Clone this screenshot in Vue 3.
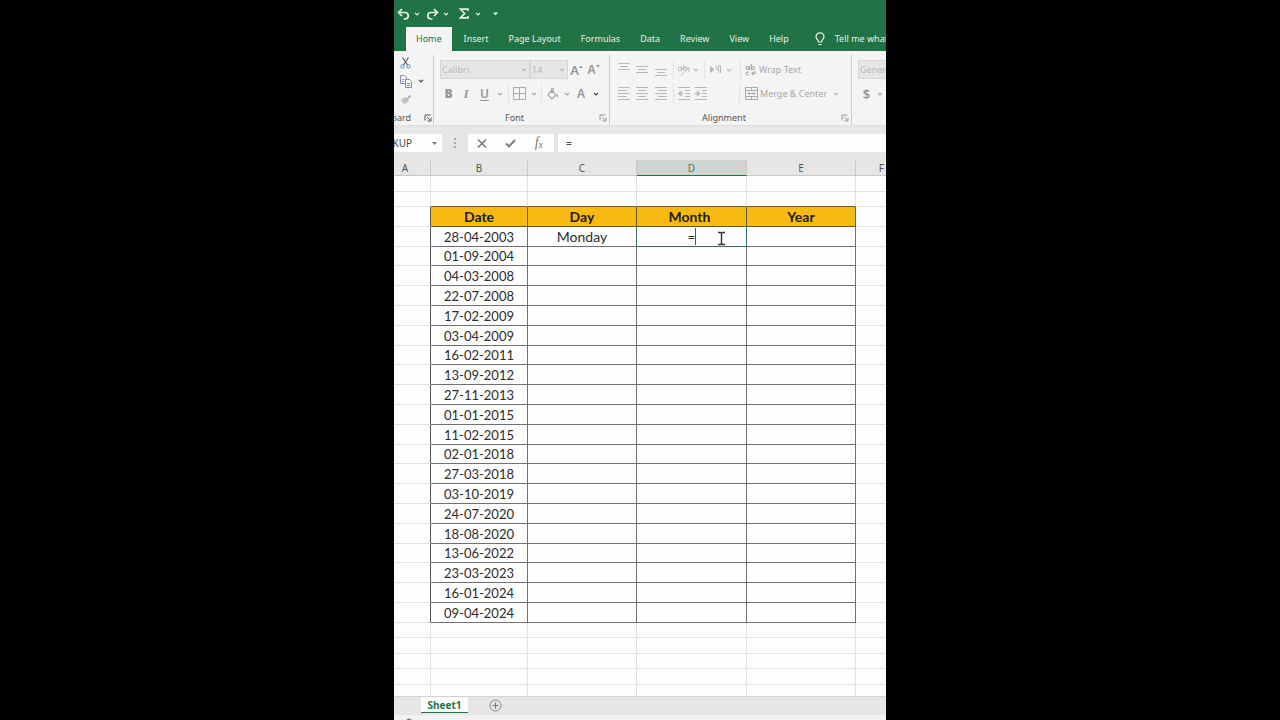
<script setup>
import { h, ref } from 'vue'

const Chevron = () =>
  h('svg', { class: 'chevron', width: 6, height: 4, viewBox: '0 0 6 4', 'aria-hidden': 'true' }, [
    h('path', { d: 'M1 .8 3 2.8 5 .8', fill: 'none', stroke: 'currentColor', 'stroke-width': 1.2 })
  ])

const Launcher = () =>
  h('svg', { width: 8, height: 8, viewBox: '0 0 8 8', 'aria-hidden': 'true' }, [
    h('path', { d: 'M1 6.5V1h5.5M3 3l3.5 3.5M7 3.500V7H3.500', fill: 'none', stroke: 'currentColor', 'stroke-width': 1 })
  ])

const Lines = (props) =>
  h('svg', { width: 12, height: 13, viewBox: '0 0 12 13', 'aria-hidden': 'true' }, [
    h('path', { d: props.d, fill: 'none', stroke: 'currentColor', 'stroke-width': 1 })
  ])
Lines.props = ['d']

const tabs = ['Home', 'Insert', 'Page Layout', 'Formulas', 'Data', 'Review', 'View', 'Help']
const vertical = [
  { label: 'Top Align', d: 'M0 .5h12M2 3.500h8M0 6.500h12' },
  { label: 'Middle Align', d: 'M0 3.500h12M2 6.500h8M0 9.500h12' },
  { label: 'Bottom Align', d: 'M0 6.500h12M2 9.500h8M0 12.500h12' }
]
const horizontal = [
  { label: 'Align Left', d: 'M0 .5h12M0 3.500h9M0 6.500h12M0 9.500h9M0 12.500h12' },
  { label: 'Center', d: 'M0 .5h12M2 3.500h8M0 6.500h12M2 9.500h8M0 12.500h12' },
  { label: 'Align Right', d: 'M0 .5h12M3 3.500h9M0 6.500h12M3 9.500h9M0 12.500h12' }
]
const columns = ['A', 'B', 'C', 'D', 'E', 'F']
const dates = [
  '28-04-2003', '01-09-2004', '04-03-2008', '22-07-2008', '17-02-2009',
  '03-04-2009', '16-02-2011', '13-09-2012', '27-11-2013', '01-01-2015',
  '11-02-2015', '02-01-2018', '27-03-2018', '03-10-2019', '24-07-2020',
  '18-08-2020', '13-06-2022', '23-03-2023', '16-01-2024', '09-04-2024'
]
const nameBox = ref('VLOOKUP')
const formula = ref('=')
</script>

<template>
  <main class="stage">
    <div class="excel">
      <header class="titlebar">
        <button class="undo" aria-label="Undo">
          <svg width="13" height="12" viewBox="0 0 13 12"><path d="M5 1 1.500 4.500 5 8M1.500 4.500H8a3.200 3.200 0 0 1 0 6.500H6.500" /></svg>
        </button>
        <button class="narrow" aria-label="Undo history"><Chevron /></button>
        <button class="redo" aria-label="Redo">
          <svg width="13" height="12" viewBox="0 0 13 12"><path d="M8 1l3.500 3.500L8 8M11.500 4.500H5a3.200 3.200 0 0 0 0 6.500h1.500" /></svg>
        </button>
        <button class="narrow" aria-label="Redo history"><Chevron /></button>
        <button class="sum" aria-label="AutoSum">
          <svg width="10" height="11" viewBox="0 0 10 11"><path d="M9 3V1.200H1.500L5.500 5.500l-4 4.300H9V8" /></svg>
        </button>
        <button class="narrow" aria-label="AutoSum options"><Chevron /></button>
        <button class="customize" aria-label="Customize toolbar">
          <svg width="5" height="5" viewBox="0 0 5 5"><path class="solid" d="M0 1.500h5L2.500 4.500z" /></svg>
        </button>
      </header>

      <nav class="tabs" aria-label="Ribbon tabs">
        <button v-for="tab in tabs" :key="tab" :class="{ active: tab === 'Home' }">{{ tab }}</button>
        <button class="tell">
          <svg width="10" height="14" viewBox="0 0 10 14" aria-hidden="true"><path d="M3.300 10V8.800C2 7.500 1 6.500 1 4.800a4 4 0 0 1 8 0C9 6.500 8 7.500 6.700 8.800V10zM3.500 12.500h3" /></svg>
          <span>Tell me what</span>
        </button>
      </nav>

      <section class="ribbon" aria-label="Home ribbon">
        <div class="group clipboard">
          <div class="tools clip-tools">
            <button class="cut" aria-label="Cut">
              <svg width="11" height="12" viewBox="0 0 11 12" fill="none"><path d="M2.500.5 7.500 8M8.500.5 3.500 8" stroke="#666" stroke-width="1.300" /><circle cx="2.500" cy="9.500" r="1.700" stroke="#4b94bd" /><circle cx="8.500" cy="9.500" r="1.700" stroke="#4b94bd" /></svg>
            </button>
            <button aria-label="Copy">
              <svg width="12" height="13" viewBox="0 0 12 13" fill="#f8f8f8" stroke="#8b8aa8"><path d="M.5.500h4l2 2v6h-6z" /><path d="M5.500 4.500h4l2 2v6h-6z" /><path d="M2 4.500h2M2 6.500h2M7 8.500h3M7 10.500h3" stroke="#6ba0c4" /></svg>
            </button>
            <button class="dark" aria-label="Copy options"><Chevron /></button>
            <button aria-label="Format Painter">
              <svg width="12" height="11" viewBox="0 0 12 11"><path d="M7 4 10 1l1 1-3 3z" fill="#999" /><path d="M1 5l3-1 4 3-2 3-2-1-1 1z" fill="#c4c4c4" /><path d="m4.500 3.500 4 3.500" stroke="#aaa" stroke-width="1.300" /></svg>
            </button>
          </div>
          <div class="caption"><span class="cut-label">Clipboard</span><button class="dark" aria-label="Clipboard settings"><Launcher /></button></div>
        </div>

        <div class="group font">
          <div class="tools">
            <div class="row font-top">
              <label class="pick"><select aria-label="Font"><option>Calibri</option></select><Chevron /></label>
              <label class="pick"><select aria-label="Font size"><option>14</option></select><Chevron /></label>
              <button class="letter big" aria-label="Increase Font Size">A<svg width="4" height="3" viewBox="0 0 4 3"><path d="M0 3 2 .5 4 3z" fill="currentColor" /></svg></button>
              <button class="letter" aria-label="Decrease Font Size">A<svg width="4" height="3" viewBox="0 0 4 3"><path d="M0 0l2 2.500L4 0z" fill="currentColor" /></svg></button>
            </div>
            <div class="row font-bottom">
              <button class="letter" aria-label="Bold"><b>B</b></button>
              <button class="letter" aria-label="Italic"><i>I</i></button>
              <button class="letter" aria-label="Underline"><u>U</u></button>
              <button aria-label="Underline options"><Chevron /></button>
              <span class="rule"></span>
              <button aria-label="Borders"><svg width="13" height="13" viewBox="0 0 13 13"><path d="M.5.500h12v12H.5zM6.500.500v12M.5 6.500h12" fill="none" stroke="currentColor" /></svg></button>
              <button aria-label="Border options"><Chevron /></button>
              <span class="rule"></span>
              <button aria-label="Fill Color"><svg width="12" height="12" viewBox="0 0 12 12"><path d="M4.500 2.500 9 7l-4 4-4-4zM4.500 5V.8h2V4" fill="none" stroke="currentColor" stroke-width="1.200" /><path d="M10.200 5.500c1 2 1.500 3 .3 3.500s-1.500-1.500-.3-3.500" fill="currentColor" /></svg></button>
              <button aria-label="Fill options"><Chevron /></button>
              <button class="letter" aria-label="Font Color">A</button>
              <button class="dark" aria-label="Font color options"><Chevron /></button>
            </div>
          </div>
          <div class="caption"><span>Font</span><button aria-label="Font settings"><Launcher /></button></div>
        </div>

        <div class="group alignment">
          <div class="tools">
            <div class="row align-top">
              <button v-for="v in vertical" :key="v.label" :aria-label="v.label"><Lines :d="v.d" /></button>
              <span class="rule"></span>
              <button aria-label="Orientation"><svg width="13" height="12" viewBox="0 0 13 12" fill="none" stroke="currentColor"><path d="M4 11.500 11 4.500M12 8V4H8.500" /><circle cx="2.800" cy="5" r="1.800" /><path d="M4.800 3v4M6.500 1v5" /><circle cx="8" cy="4.500" r="1.500" /></svg></button>
              <button aria-label="Orientation options"><Chevron /></button>
              <span class="rule"></span>
              <button aria-label="Text direction"><svg width="11" height="9" viewBox="0 0 11 9" fill="none" stroke="currentColor"><path d="M.5 1v7M1 2l3 2.500L1 7z" fill="currentColor" /><path d="M8.500 8V1M10.500 8V1M11 1H7.500a1.500 1.500 0 0 0 0 3.500h1" /></svg></button>
              <button aria-label="Direction options"><Chevron /></button>
              <span class="rule"></span>
              <button class="wide"><svg width="12" height="12" viewBox="0 0 12 12" fill="none" stroke="currentColor" stroke-width="1.200"><circle cx="2.500" cy="4" r="1.500" /><path d="M4.500 2v4M6.500 0v6M4.500 8H2.500a1.500 1.500 0 0 0 0 3h2M10 7v2.500H7M8.500 8 7 9.500 8.500 11" /><circle cx="8" cy="4" r="1.500" /></svg>Wrap Text</button>
            </div>
            <div class="row align-bottom">
              <button v-for="a in horizontal" :key="a.label" :aria-label="a.label"><Lines :d="a.d" /></button>
              <span class="rule"></span>
              <button aria-label="Decrease Indent"><svg width="12" height="13" viewBox="0 0 12 13" fill="none" stroke="currentColor"><path d="M0 .5h12M7 3.500h5M7 6.500h5M7 9.500h5M0 12.500h12" /><path d="M5 6.500H1M3.500 4 1 6.500 3.500 9" stroke-width="1.500" /></svg></button>
              <button aria-label="Increase Indent"><svg width="12" height="13" viewBox="0 0 12 13" fill="none" stroke="currentColor"><path d="M0 .5h12M7 3.500h5M7 6.500h5M7 9.500h5M0 12.500h12" /><path d="M0 6.500h4M2 4l2.500 2.500L2 9" stroke-width="1.500" /></svg></button>
              <span class="rule merge-rule"></span>
              <button class="wide"><svg width="13" height="13" viewBox="0 0 13 13" fill="none" stroke="currentColor"><path d="M.5.500h12v12H.5zM.5 3.500h12M.5 9.500h12M6.500.500v3M6.500 9.500v3M3 6.500h7M4.500 5 3 6.500 4.500 8M8.500 5 10 6.500 8.500 8" /></svg>Merge &amp; Center</button>
              <button aria-label="Merge options"><Chevron /></button>
            </div>
          </div>
          <div class="caption"><span>Alignment</span><button aria-label="Alignment settings"><Launcher /></button></div>
        </div>

        <div class="group number">
          <div class="tools">
            <div class="row"><label class="pick"><select aria-label="Number Format"><option>General</option></select></label></div>
            <div class="row"><button class="letter dollar" aria-label="Accounting Format">$</button><button class="narrow" aria-label="Currency options"><Chevron /></button></div>
          </div>
        </div>
      </section>

      <section class="formula-bar" aria-label="Formula bar">
        <div class="name"><input v-model="nameBox" aria-label="Name Box" /><svg width="5" height="3" viewBox="0 0 5 3" aria-hidden="true"><path d="M0 0h5L2.500 3z" fill="#777" /></svg></div>
        <span class="grip" aria-hidden="true"></span>
        <div class="actions">
          <button aria-label="Cancel"><svg width="10" height="9" viewBox="0 0 10 9"><path d="M1 .5 9 8.500M9 .5 1 8.500" fill="none" stroke="#777" stroke-width="1.500" /></svg></button>
          <button aria-label="Enter"><svg width="11" height="9" viewBox="0 0 11 9"><path d="M1 4.500 4 7.500 10 1" fill="none" stroke="#777" stroke-width="1.900" /></svg></button>
          <button class="fx" aria-label="Insert Function">f<small>x</small></button>
        </div>
        <input v-model="formula" class="formula" aria-label="Formula" />
      </section>

      <div class="sheet">
        <table>
          <colgroup><col class="col-a" /><col class="col-b" /><col class="col-c" /><col class="col-d" /><col class="col-e" /><col /></colgroup>
          <thead>
            <tr><th v-for="c in columns" :key="c" scope="col" :class="{ selected: c === 'D', last: c === 'F' }">{{ c }}</th></tr>
          </thead>
          <tbody class="blank before">
            <tr v-for="n in 2" :key="n"><td v-for="c in columns" :key="c"></td></tr>
          </tbody>
          <tbody class="headings">
            <tr><td></td><th>Date</th><th>Day</th><th class="month">Month</th><th>Year</th><td></td></tr>
          </tbody>
          <tbody class="records">
            <tr v-for="(date, i) in dates" :key="date">
              <td></td>
              <td>{{ date }}</td>
              <td class="day">{{ i === 0 ? 'Monday' : '' }}</td>
              <td v-if="i === 0" class="editing">
                <input v-model="formula" aria-label="Cell D" /><span class="caret"></span>
                <svg class="pointer" width="9" height="15" viewBox="0 0 9 15" aria-hidden="true"><path d="M1 1.500h2.500l1 1 1-1H8M1 13.500h2.500l1-1 1 1H8M4.500 2.500v10" fill="none" stroke="#333" stroke-width="1.400" /></svg>
              </td>
              <td v-else></td>
              <td></td><td></td>
            </tr>
          </tbody>
          <tbody class="blank after">
            <tr v-for="n in 4" :key="n"><td v-for="c in columns" :key="c"></td></tr>
            <tr class="partial"><td v-for="c in columns" :key="c"></td></tr>
          </tbody>
        </table>
      </div>

      <footer>
        <div class="sheet-tabs">
          <button class="sheet-tab">Sheet1</button>
          <button class="add" aria-label="New sheet"><svg width="13" height="13" viewBox="0 0 13 13"><path d="M6.500 3.500v6M3.500 6.500h6" stroke="#777" stroke-width="1.200" /><circle cx="6.500" cy="6.500" r="5.500" fill="none" stroke="#888" /></svg></button>
        </div>
        <div class="status"><svg width="6" height="2" viewBox="0 0 6 2" aria-hidden="true"><path d="M0 2Q3-1 6 2" fill="#777" /></svg></div>
      </footer>
    </div>
  </main>
</template>

<style>
body { background: #000; }
</style>

<style scoped>
* { box-sizing: border-box; }
.stage { display: flex; justify-content: center; min-height: 100vh; background: #000; }
.excel {
  display: flex; flex-direction: column; width: 38.4vw; min-width: 492px; min-height: 100vh; overflow: hidden;
  background: #fefefe; color: #444; font: 9px/12px "Noto Sans", "Open Sans", sans-serif;
}
button, input, select { margin: 0; padding: 0; border: 0; border-radius: 0; outline: 0; background: none; color: inherit; font: inherit; }
button { display: flex; align-items: center; justify-content: center; white-space: nowrap; }
svg { flex: none; }

.titlebar { display: flex; align-items: center; height: 27px; color: #e3f1e8; background: #217346; }
.titlebar path { fill: none; stroke: currentColor; stroke-width: 1.7; }
.titlebar .solid { fill: currentColor; stroke: none; }
.undo { width: 18px; }
.narrow { width: 10px; }
.redo { width: 19px; padding-left: 2px; }
.sum { width: 22px; padding-left: 4px; }
.customize { width: 24px; }

.tabs { display: flex; height: 24px; padding-left: 12px; overflow: hidden; color: #e3f1e8; background: #217346; }
.tabs button { flex: none; padding: 0 10px; }
.tabs .active { margin-right: 2px; color: #217346; background: #f4f4f4; }
.tabs .tell { gap: 10px; padding: 0 0 0 16px; }
.tell path { fill: none; stroke: currentColor; stroke-width: 1.2; }

.ribbon { display: flex; height: 75px; padding: 4px 0 0; overflow: hidden; color: #a9a9a9; background: #f4f4f4; border-bottom: 1px solid #e0e0e0; }
.group { display: flex; flex: none; flex-direction: column; border-right: 1px solid #cdcdcd; }
.group:last-child { border-right: 0; }
.tools { display: flex; flex: 1; flex-direction: column; gap: 5px; padding-top: 5px; }
.row { display: grid; grid-auto-flow: column; justify-content: start; height: 19px; align-items: center; }
.dark { color: #444; }
.caption { display: flex; align-items: center; height: 14px; color: #555; }
.caption span { flex: 1; text-align: center; }
.caption button { width: 12px; color: #999; }
.caption .dark { color: #555; }
.rule { width: 1px; height: 19px; background: #e4e4e4; justify-self: center; }
.clipboard { width: 40px; }
.clip-tools { display: grid; grid-template-columns: 23px 8px; grid-template-rows: 16px 20px 17px; gap: 0; padding-top: 0; }
.clip-tools .cut { grid-column: 1; grid-row: 1; }
.clip-tools button:nth-child(2) { grid-column: 1; grid-row: 2; }
.clip-tools .dark { grid-column: 2; grid-row: 2; }
.clip-tools button:nth-child(4) { grid-column: 1; grid-row: 3; }
.clipboard .caption { overflow: hidden; justify-content: flex-end; }
.clipboard .cut-label { flex: none; margin-right: 13px; }
.clipboard .caption button { margin-right: 1px; }
.font { width: 176px; padding-left: 6px; }
.font .caption span { padding-right: 8px; }
.alignment .caption span { padding-right: 6px; }
.font-top { grid-template-columns: 90px 38px 17px 17px; }
.font-bottom { grid-template-columns: 17px 18px 19px 11px 6px 17px 11px 5px 17px 11px 18px 11px; }
.pick { position: relative; display: flex; height: 19px; background: #e6e6e6; border: 1px solid #d6d6d6; color: #b8b8b8; }
.pick select { width: 100%; padding: 0 1px; appearance: none; }
.pick .chevron { position: absolute; right: 2px; top: 7px; }
.letter { font-size: 12px; line-height: 16px; font-weight: 600; color: #969696; }
.letter svg { align-self: flex-start; margin-top: 3px; }
.letter.big { font-size: 13px; }
.letter i { font-family: "Liberation Serif", serif; }
.letter u { text-underline-offset: 2px; }
.alignment { width: 242px; padding-left: 5px; }
.alignment .row { color: #b8b8b8; }
.align-top { grid-template-columns: 18px 18px 20px 4px 17px 8px 8px 15px 12px 10px auto; }
.align-bottom { grid-template-columns: 18px 18px 20px 4px 17px 18px 35px auto 18px; }
.merge-rule { justify-self: end; margin-right: 5px; }
.wide { gap: 2px; color: #a9a9a9; }
.number { padding-left: 6px; }
.number .pick { width: 60px; }
.dollar { width: 17px; font-size: 13px; }

.formula-bar { display: flex; align-items: center; height: 34px; background: #e6e6e6; }
.formula-bar > div { display: flex; align-items: center; height: 18px; background: #fefefe; }
.name { position: relative; width: 48px; overflow: hidden; justify-content: flex-end; gap: 20px; padding-right: 5px; }
.name input { flex: none; width: 60px; text-align: right; font-size: 10px; }
.grip { width: 26px; height: 10px; background: radial-gradient(circle, #aaa 1px, transparent 1px) center / 4px 4px repeat-y; }
.actions { width: 86px; padding-right: 1px; }
.actions button { flex: 1; }
.actions .fx { color: #777; font: italic 14px/16px "Liberation Serif", serif; }
.fx small { font-size: 10px; padding-top: 3px; }
.formula { flex: 1; min-width: 0; height: 18px; margin-left: 4px; padding-left: 8px; background: #fefefe; font-size: 10px; }

.sheet { flex: 1; overflow: hidden; color: #2c2c2c; font-family: Lato, Carlito, sans-serif; }
table { width: 100%; table-layout: fixed; border-collapse: separate; border-spacing: 0; }
.col-a { width: 37px; }
.col-b { width: 97px; }
.col-c, .col-e { width: 109px; }
.col-d { width: 110px; }
th, td { padding: 0; border: solid #e3e3e6; border-width: 0 1px 1px 0; text-align: center; overflow: hidden; }
thead th { height: 16px; color: #555; background: #e6e6e6; border-color: #c9c9c9; font: 10px/12px "Noto Sans", sans-serif; }
thead th:first-child { padding-right: 14px; }
thead .selected { color: #4b7b65; background: #d0d4d1; border-bottom-color: #217346; }
thead .last { padding-right: 2px; text-align: right; border-right: 0; }
.blank td { height: 15px; }
.before tr:first-child td, .after tr:nth-child(2n) td { height: 16px; }
.before tr:last-child td:nth-child(n + 2):nth-child(-n + 5) { border-bottom-color: #665a2c; }
.after .partial td { height: 11px; border-bottom: 0; }
.headings th { height: 20px; color: #241c08; background: #f7ba11; border-color: #665a2c; font-size: 14px; line-height: 16px; font-weight: 700; }
.headings .month { padding-right: 4px; }
.records td { height: 20px; font-size: 13px; line-height: 16px; }
.records .day { font-size: 14px; }
.records tr:nth-child(5n + 2) td { height: 19px; }
.records td:nth-child(n + 2):nth-child(-n + 5) { border-color: #707070; }
.headings td:first-child, .records td:first-child { border-right-color: #555; }
td:last-child { border-right: 0; }
.sheet .records .editing.editing { position: relative; border-color: #347653; overflow: visible; box-shadow: -1px 0 #347653; }
.editing input { display: block; width: 100%; height: 16px; text-align: center; }
.caret { position: absolute; left: 58px; top: 1px; width: 1px; height: 17px; background: #555; }
.pointer { position: absolute; left: 80px; top: 4px; }

.sheet-tabs { display: flex; height: 19px; padding-left: 27px; background: #e6e6e6; border-top: 1px solid #d3d3d3; }
.sheet-tab { width: 47px; height: 16px; color: #217346; background: #fefefe; border-bottom: 1px solid #217346; font-size: 10px; font-weight: 700; }
.add { width: 54px; height: 16px; }
.status { height: 5px; padding: 3px 0 0 12px; background: #f2f2f2; }
.status svg { display: block; }
</style>
